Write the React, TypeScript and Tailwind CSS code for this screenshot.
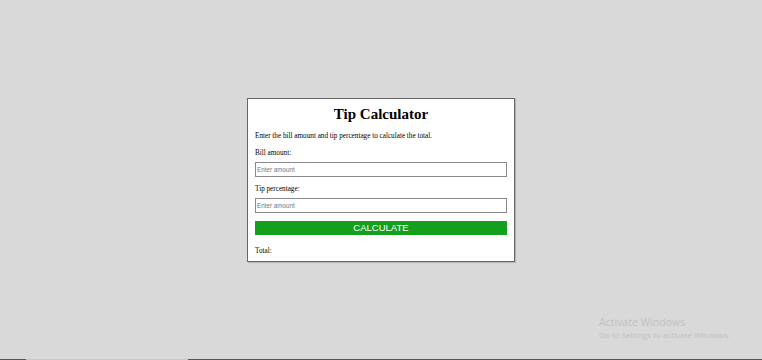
import React from 'react';

const serif = { fontFamily: '"Liberation Serif", "Times New Roman", serif' };

const Field: React.FC<{ label: string; top: string }> = ({ label, top }) => (
  <div className={top}>
    <label className="block text-[7.2px] leading-[10px] text-black">{label}</label>
    <input
      type="text"
      placeholder="Enter amount"
      className="mt-[4px] block h-[15px] w-full border border-[#8a8a8a] bg-white px-[1px] text-[6.3px] placeholder:text-[#777] outline-none"
      style={{ fontFamily: '"Liberation Sans", Arial, sans-serif' }}
    />
  </div>
);

export default function App() {
  return (
    <div className="relative flex h-screen w-full flex-col bg-[#d9d9d9]" style={serif}>
      <div className="flex flex-1 items-center justify-center">
        <div className="w-[268px] border border-[#666] bg-white px-[7px] pb-[5px] pt-[5px] shadow-[1px_1px_1px_rgba(0,0,0,0.15)]">
          <h1 className="text-center text-[15px] font-bold leading-[20px] text-black">Tip Calculator</h1>
          <p className="mt-[7px] text-[7.2px] leading-[10px] text-black">
            Enter the bill amount and tip percentage to calculate the total.
          </p>
          <Field label="Bill amount:" top="mt-[7px]" />
          <Field label="Tip percentage:" top="mt-[7px]" />
          <button
            className="mt-[8px] block h-[14px] w-full bg-[#14a01c] text-[9.5px] leading-[14px] text-white"
            style={{ fontFamily: '"Liberation Sans", Arial, sans-serif' }}
          >
            CALCULATE
          </button>
          <p className="mt-[11px] text-[7.2px] leading-[10px] text-black">Total:</p>
        </div>
      </div>
      <div className="flex h-px w-full">
        <div className="w-[26px] bg-[#555]" />
        <div className="w-[162px] bg-[#c8c8c8]" />
        <div className="flex-1 bg-[#555]" />
      </div>
      <div
        className="pointer-events-none absolute left-[599px] top-[315px] text-[#c0c0c0]"
        style={{ fontFamily: '"Open Sans", "Noto Sans", sans-serif' }}
      >
        <div className="text-[10.5px] leading-[14px]">Activate Windows</div>
        <div className="mt-[1px] text-[8px] leading-[10px]">Go to Settings to activate Windows.</div>
      </div>
    </div>
  );
}
